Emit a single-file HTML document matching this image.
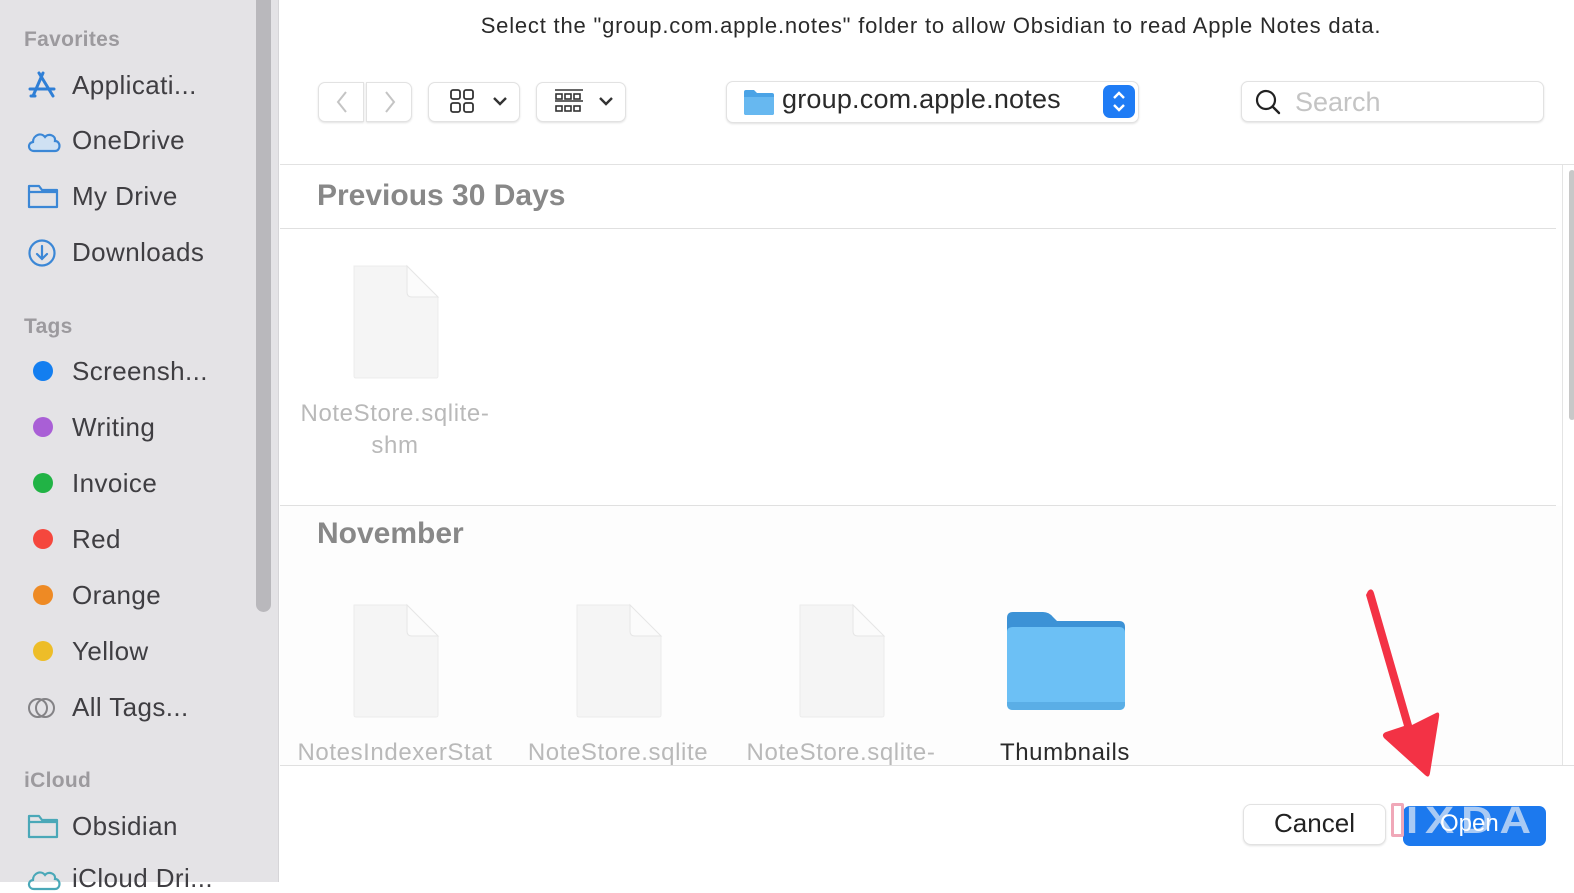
<!DOCTYPE html>
<html><head><meta charset="utf-8"><style>
*{margin:0;padding:0;box-sizing:border-box}
body{width:1574px;height:882px;overflow:hidden;position:relative;background:#fff;font-family:"Liberation Sans",sans-serif;}
.abs{position:absolute}
#side{left:0;top:0;width:279px;height:882px;background:#e4e3e6;border-right:1px solid #d6d5d8}
.hd{position:absolute;left:24px;font-size:21px;font-weight:bold;color:#9c9a9e;letter-spacing:0.3px}
.it{position:absolute;left:72px;font-size:26px;color:#3f3e42;line-height:30px;letter-spacing:0.4px}
.dot{position:absolute;left:33px;width:20px;height:20px;border-radius:50%}
.ic{position:absolute;left:26px}
.btn{position:absolute;background:#fff;border:1px solid #e2e2e2;border-radius:7px;box-shadow:0 1px 2px rgba(0,0,0,.12)}
.fname{position:absolute;font-size:24px;letter-spacing:0.6px;color:#b9b9b9;text-align:center;width:230px;line-height:32px}
.doc{position:absolute;width:88px;height:116px}
</style></head><body>
<div id="side" class="abs">
<div class="hd" style="top:28px">Favorites</div>
<svg class="ic" style="top:70px" width="34" height="30" viewBox="0 0 34 30"><g stroke="#2f7fd6" stroke-width="3" stroke-linecap="round" fill="none"><path d="M17 3 L7 26"/><path d="M13 3 L27 26"/><path d="M4 19 L28 19"/><path d="M5 26 L9 26"/></g></svg>
<div class="it" style="top:70px">Applicati...</div>
<svg class="ic" style="top:128px" width="36" height="26" viewBox="0 0 36 26"><path d="M8 23 C2 23 1 15 7 14 C7 7 15 4 19 9 C22 5 30 7 29 13 C35 13 35 23 29 23 Z" fill="#cfe1f3" stroke="#3b87d6" stroke-width="2.2"/></svg>
<div class="it" style="top:125px">OneDrive</div>
<svg class="ic" style="top:182px" width="34" height="28" viewBox="0 0 34 28"><path d="M3 4 H13 L16 8 H31 V25 H3 Z M3 10 H31" fill="none" stroke="#3b87d6" stroke-width="2.2" stroke-linejoin="round"/></svg>
<div class="it" style="top:181px">My Drive</div>
<svg class="ic" style="top:237px" width="32" height="32" viewBox="0 0 32 32"><circle cx="16" cy="16" r="12.5" fill="none" stroke="#3b87d6" stroke-width="2.2"/><path d="M16 9 V22 M11 17 L16 22 L21 17" fill="none" stroke="#3b87d6" stroke-width="2.2" stroke-linecap="round"/></svg>
<div class="it" style="top:237px">Downloads</div>
<div class="hd" style="top:315px">Tags</div>
<div class="dot" style="top:361px;background:#137ef0"></div><div class="it" style="top:356px">Screensh...</div>
<div class="dot" style="top:417px;background:#a95fd6"></div><div class="it" style="top:412px">Writing</div>
<div class="dot" style="top:473px;background:#21b345"></div><div class="it" style="top:468px">Invoice</div>
<div class="dot" style="top:529px;background:#f5473d"></div><div class="it" style="top:524px">Red</div>
<div class="dot" style="top:585px;background:#ee8a24"></div><div class="it" style="top:580px">Orange</div>
<div class="dot" style="top:641px;background:#edbd28"></div><div class="it" style="top:636px">Yellow</div>
<svg class="ic" style="top:696px" width="34" height="24" viewBox="0 0 34 24"><circle cx="12" cy="12" r="9" fill="none" stroke="#848386" stroke-width="2"/><circle cx="19" cy="12" r="9" fill="none" stroke="#848386" stroke-width="2"/></svg>
<div class="it" style="top:692px">All Tags...</div>
<div class="hd" style="top:769px">iCloud</div>
<svg class="ic" style="top:812px" width="34" height="28" viewBox="0 0 34 28"><path d="M3 4 H13 L16 8 H31 V25 H3 Z M3 10 H31" fill="none" stroke="#4aa8b8" stroke-width="2.2" stroke-linejoin="round"/></svg>
<div class="it" style="top:811px">Obsidian</div>
<svg class="ic" style="top:866px" width="36" height="26" viewBox="0 0 36 26"><path d="M8 23 C2 23 1 15 7 14 C7 7 15 4 19 9 C22 5 30 7 29 13 C35 13 35 23 29 23 Z" fill="none" stroke="#4aa8b8" stroke-width="2.2"/></svg>
<div class="it" style="top:863px">iCloud Dri...</div>
<div class="abs" style="left:256px;top:-10px;width:15px;height:622px;border-radius:8px;background:#b9b8bc"></div>
</div>

<div class="abs" style="left:280px;top:13px;width:1302px;text-align:center;font-size:22px;letter-spacing:0.8px;color:#2a2a2a">Select the "group.com.apple.notes" folder to allow Obsidian to read Apple Notes data.</div>

<div class="btn" style="left:318px;top:82px;width:46px;height:40px;border-radius:7px 0 0 7px"></div>
<div class="btn" style="left:366px;top:82px;width:46px;height:40px;border-radius:0 7px 7px 0"></div>
<svg class="abs" style="left:330px;top:88px" width="80" height="28"><path d="M16 4 L8 14 L16 24" fill="none" stroke="#c4c4c4" stroke-width="2"/><path d="M56 4 L64 14 L56 24" fill="none" stroke="#c4c4c4" stroke-width="2"/></svg>
<div class="btn" style="left:428px;top:82px;width:92px;height:40px"></div>
<svg class="abs" style="left:449px;top:88px" width="66" height="28" viewBox="0 0 66 28"><g fill="none" stroke="#333" stroke-width="1.8"><rect x="2" y="2" width="9" height="9" rx="2"/><rect x="15" y="2" width="9" height="9" rx="2"/><rect x="2" y="15" width="9" height="9" rx="2"/><rect x="15" y="15" width="9" height="9" rx="2"/><path d="M45 10 L51 16 L57 10" stroke-width="2.4"/></g></svg>
<div class="btn" style="left:536px;top:82px;width:90px;height:40px"></div>
<svg class="abs" style="left:554px;top:88px" width="66" height="28" viewBox="0 0 66 28"><g fill="none" stroke="#333" stroke-width="1.6"><path d="M1 2 H29 M1 13 H29"/><rect x="2" y="6" width="6" height="5"/><rect x="11" y="6" width="6" height="5"/><rect x="20" y="6" width="6" height="5"/><rect x="2" y="18" width="6" height="5"/><rect x="11" y="18" width="6" height="5"/><rect x="20" y="18" width="6" height="5"/><path d="M46 10 L52 16 L58 10" stroke-width="2.4"/></g></svg>
<div class="btn" style="left:726px;top:81px;width:413px;height:42px"></div>
<svg class="abs" style="left:743px;top:88px" width="32" height="28" viewBox="0 0 32 28"><path d="M1 4 Q1 2 3 2 H11 L14 5 H29 Q31 5 31 7 V25 Q31 27 29 27 H3 Q1 27 1 25 Z" fill="#4aa3e6"/><path d="M1 9 H31 V25 Q31 27 29 27 H3 Q1 27 1 25 Z" fill="#67b8f0"/></svg>
<div class="abs" style="left:782px;top:84px;font-size:27px;letter-spacing:0.2px;color:#2a2a2a">group.com.apple.notes</div>
<div class="abs" style="left:1103px;top:85px;width:32px;height:33px;border-radius:7px;background:#1f7cf5"></div>
<svg class="abs" style="left:1103px;top:85px" width="32" height="33"><path d="M11 13 L16 8 L21 13 M11 20 L16 25 L21 20" fill="none" stroke="#fff" stroke-width="2.4"/></svg>
<div class="btn" style="left:1241px;top:81px;width:303px;height:41px"></div>
<svg class="abs" style="left:1254px;top:88px" width="28" height="28"><circle cx="12" cy="12" r="9" fill="none" stroke="#222" stroke-width="2.2"/><path d="M18.5 18.5 L25 25" stroke="#222" stroke-width="2.4" stroke-linecap="round"/></svg>
<div class="abs" style="left:1295px;top:87px;font-size:27px;color:#c4c4c4">Search</div>

<div class="abs" style="left:280px;top:164px;width:1294px;height:1px;background:#e2e2e2"></div>
<div class="abs" style="left:317px;top:179px;font-size:30px;font-weight:bold;color:#888">Previous 30 Days</div>
<div class="abs" style="left:280px;top:228px;width:1276px;height:1px;background:#e0e0e0"></div>

<svg class="doc" style="left:352px;top:264px" viewBox="0 0 88 116"><path d="M2 2 H55 L86 33 V112 Q86 114 84 114 H4 Q2 114 2 112 Z" fill="#f5f5f5" stroke="#ececec"/><path d="M55 2 V28 Q55 33 60 33 H86 Z" fill="#fbfbfb" stroke="#e6e6e6"/></svg>
<div class="fname" style="left:280px;top:398px">NoteStore.sqlite-<br>shm</div>

<div class="abs" style="left:280px;top:505px;width:1276px;height:1px;background:#e0e0e0"></div>
<div class="abs" style="left:280px;top:506px;width:1282px;height:259px;background:#fdfdfd"></div>
<div class="abs" style="left:317px;top:517px;font-size:30px;font-weight:bold;color:#888">November</div>
<svg class="doc" style="left:352px;top:603px" viewBox="0 0 88 116"><path d="M2 2 H55 L86 33 V112 Q86 114 84 114 H4 Q2 114 2 112 Z" fill="#f5f5f5" stroke="#ececec"/><path d="M55 2 V28 Q55 33 60 33 H86 Z" fill="#fbfbfb" stroke="#e6e6e6"/></svg>
<svg class="doc" style="left:575px;top:603px" viewBox="0 0 88 116"><path d="M2 2 H55 L86 33 V112 Q86 114 84 114 H4 Q2 114 2 112 Z" fill="#f5f5f5" stroke="#ececec"/><path d="M55 2 V28 Q55 33 60 33 H86 Z" fill="#fbfbfb" stroke="#e6e6e6"/></svg>
<svg class="doc" style="left:798px;top:603px" viewBox="0 0 88 116"><path d="M2 2 H55 L86 33 V112 Q86 114 84 114 H4 Q2 114 2 112 Z" fill="#f5f5f5" stroke="#ececec"/><path d="M55 2 V28 Q55 33 60 33 H86 Z" fill="#fbfbfb" stroke="#e6e6e6"/></svg>
<svg class="abs" style="left:1005px;top:610px" width="122" height="102" viewBox="0 0 122 102"><path d="M2 8 Q2 2 8 2 H38 Q44 2 48 7 L52 11 H114 Q120 11 120 17 V40 H2 Z" fill="#3c92d6"/><path d="M2 22 Q2 17 8 17 H114 Q120 17 120 23 V94 Q120 100 114 100 H8 Q2 100 2 94 Z" fill="#6cc0f5"/><path d="M2 92 H120 V94 Q120 100 114 100 H8 Q2 100 2 94 Z" fill="#5aaee6"/></svg>
<div class="abs" style="left:280px;top:736px;width:1282px;height:29px;overflow:hidden">
<div class="fname" style="left:0;top:1px">NotesIndexerStat</div>
<div class="fname" style="left:223px;top:1px">NoteStore.sqlite</div>
<div class="fname" style="left:446px;top:1px">NoteStore.sqlite-</div>
<div class="fname" style="left:670px;top:1px;color:#2a2a2a">Thumbnails</div>
</div>
<div class="abs" style="left:1562px;top:165px;width:1px;height:600px;background:#e4e4e4"></div>
<div class="abs" style="left:1569px;top:170px;width:6px;height:250px;border-radius:3px;background:#c8c8c8"></div>
<div class="abs" style="left:280px;top:765px;width:1294px;height:1px;background:#e0e0e0"></div>

<div class="btn" style="left:1243px;top:804px;width:143px;height:41px;border-radius:8px"></div>
<div class="abs" style="left:1243px;top:808px;width:143px;text-align:center;font-size:26px;color:#222">Cancel</div>
<div class="abs" style="left:1403px;top:806px;width:143px;height:40px;border-radius:7px;background:#1c79ee"></div>
<div class="abs" style="left:1391px;top:803px;width:13px;height:34px;border:3px solid #f0a8b8;border-radius:2px"></div>
<div class="abs" style="left:1406px;top:800px;font-size:38px;font-weight:bold;color:rgba(205,222,245,.8);letter-spacing:6px;transform:scaleX(1.15);transform-origin:left">IXDA</div>
<div class="abs" style="left:1440px;top:810px;font-size:24px;color:#fff">Open</div>
<svg class="abs" style="left:1360px;top:585px" width="90" height="200"><path d="M8 6 Q12 2 14 8 L52 140 L76 128 Q80 126 79 132 L70 188 Q69 194 65 190 L24 153 Q21 149 26 147 L44 141 L6 10 Z" fill="#f33245"/></svg>
</body></html>
